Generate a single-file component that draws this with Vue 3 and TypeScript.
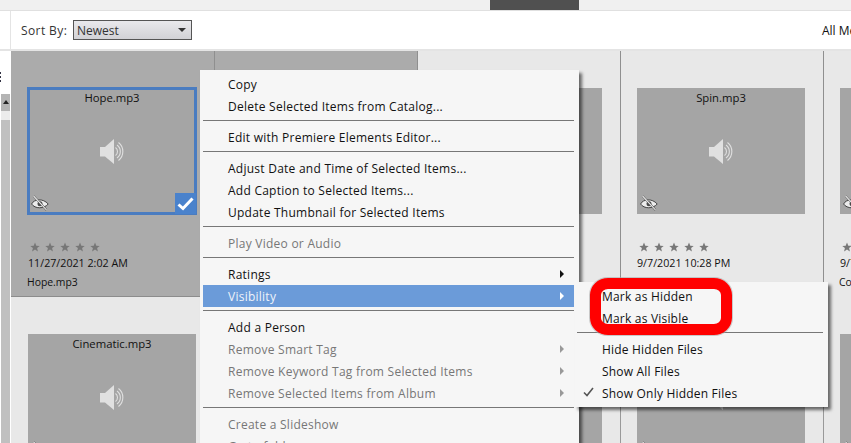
<script setup lang="ts">
interface Cell { title: string; date: string; name: string; selected?: boolean; picked?: boolean }
interface Item { label?: string; sep?: boolean; disabled?: boolean; active?: boolean; arrow?: boolean; check?: boolean }
const cells: Cell[] = [
  { title: 'Hope.mp3', date: '11/27/2021 2:02 AM', name: 'Hope.mp3', selected: true, picked: true },
  { title: '', date: '', name: '', selected: true },
  { title: '', date: '', name: '' },
  { title: 'Spin.mp3', date: '9/7/2021 10:28 PM', name: '' },
  { title: '', date: '9/7/2021 10:28 PM', name: 'Cool.mp3' },
  { title: 'Cinematic.mp3', date: '', name: '' },
  { title: '', date: '', name: '' },
  { title: '', date: '', name: '' },
  { title: '', date: '', name: '' },
  { title: '', date: '', name: '' },
]
const menu: Item[] = [
  { label: 'Copy' },
  { label: 'Delete Selected Items from Catalog...' },
  { sep: true },
  { label: 'Edit with Premiere Elements Editor...' },
  { sep: true },
  { label: 'Adjust Date and Time of Selected Items...' },
  { label: 'Add Caption to Selected Items...' },
  { label: 'Update Thumbnail for Selected Items' },
  { sep: true },
  { label: 'Play Video or Audio', disabled: true },
  { sep: true },
  { label: 'Ratings', arrow: true },
  { label: 'Visibility', arrow: true, active: true },
  { sep: true },
  { label: 'Add a Person' },
  { label: 'Remove Smart Tag', disabled: true, arrow: true },
  { label: 'Remove Keyword Tag from Selected Items', disabled: true, arrow: true },
  { label: 'Remove Selected Items from Album', disabled: true, arrow: true },
  { sep: true },
  { label: 'Create a Slideshow', disabled: true },
  { label: 'Go to folder', disabled: true },
]
const submenu: Item[] = [
  { label: 'Mark as Hidden' },
  { label: 'Mark as Visible' },
  { sep: true },
  { label: 'Hide Hidden Files' },
  { label: 'Show All Files' },
  { label: 'Show Only Hidden Files', check: true },
]
</script>

<template>
  <div class="page">
    <header class="topbar">
      <div class="tab"></div>
      <span class="clipped">y</span>
    </header>
    <div class="toolbar">
      <div class="toolbar-gap"></div>
      <span class="sort-label">Sort By:</span>
      <div class="select">
        <span>Newest</span>
        <i class="select-arrow"></i>
      </div>
      <span class="filter">All Media</span>
    </div>
    <div class="main">
      <aside class="side">
        <div class="dots"><i></i><i></i><i></i></div>
        <div class="scroll">
          <div class="scroll-up"><i></i></div>
          <div class="scroll-light"></div>
          <div class="scroll-track"></div>
        </div>
      </aside>
      <div class="grid">
        <div v-for="(c, i) in cells" :key="i" class="cell" :class="{ selected: c.selected, first: i % 5 === 0 }">
          <div class="thumb" :class="{ picked: c.picked }">
            <span class="thumb-title">{{ c.title }}</span>
            <svg class="speaker" width="24" height="25" viewBox="0 0 24 25">
              <path d="M0 8H5L14 0V25L5 17.5H0Z" fill="#e0e0e0" />
              <path d="M15.500 8.500a5 5 0 0 1 0 8M17 6a8 8 0 0 1 0 13M18.500 3.500a11.500 11.500 0 0 1 0 18" fill="none" stroke="#e0e0e0" stroke-width="1.100" />
            </svg>
            <svg class="eye" width="18" height="16" viewBox="0 0 18 16">
              <path d="M.6 9C3 4 12 3 17.200 9C13 14 4 14 .6 9Z" fill="#ececec" stroke="#333" stroke-width=".9" />
              <circle cx="9" cy="8.800" r="2.500" fill="#4a4a4a" />
              <path d="M2.500 .8L15.500 15" stroke="#555" stroke-width="1.900" />
              <path d="M2.500 .8L15.500 15" stroke="#f4f4f4" stroke-width="1.100" />
            </svg>
            <div v-if="c.picked" class="tick">
              <svg width="17" height="14" viewBox="0 0 17 14">
                <path d="M1.500 7.500L6 11.500L15.500 1.500" fill="none" stroke="#fff" stroke-width="3" />
              </svg>
            </div>
          </div>
          <div v-if="c.date" class="stars">
            <svg v-for="n in 5" :key="n" width="10" height="10" viewBox="0 0 10 10">
              <path d="M5 .5L6.300 3.700L9.700 3.900L7.100 6.100L7.900 9.500L5 7.600L2.100 9.500L2.900 6.100L.3 3.900L3.700 3.700Z" fill="#777" />
            </svg>
          </div>
          <div class="date">{{ c.date }}</div>
          <div class="name">{{ c.name }}</div>
        </div>
      </div>
    </div>

    <div class="menu context">
      <template v-for="(m, i) in menu" :key="i">
        <div v-if="m.sep" class="sep"><i></i></div>
        <div v-else class="item" :class="{ disabled: m.disabled, active: m.active }">
          <span>{{ m.label }}</span>
          <i v-if="m.arrow" class="arrow"></i>
        </div>
      </template>
    </div>

    <div class="menu sub">
      <template v-for="(m, i) in submenu" :key="i">
        <div v-if="m.sep" class="sep"><i></i></div>
        <div v-else class="item">
          <svg v-if="m.check" class="check" width="11" height="10" viewBox="0 0 11 10">
            <path d="M1 5.500L4 8.500L10 1" fill="none" stroke="#555" stroke-width="1.600" />
          </svg>
          <span>{{ m.label }}</span>
        </div>
      </template>
    </div>

    <div class="callout"></div>
  </div>
</template>

<style>
html, body { margin: 0; background: #fff; }
</style>

<style scoped>
.page {
  position: relative;
  width: 851px;
  height: 443px;
  overflow: hidden;
  font-family: "Open Sans", "Liberation Sans", sans-serif;
  font-size: 12px;
  color: #1c1c1c;
  background: #fff;
}
.topbar {
  height: 10px;
  display: flex;
  background: #f0f0f0;
  border-bottom: 1px solid #e0e0e0;
  overflow: hidden;
}
.tab { margin-left: 490px; width: 89px; background: #505050; flex: none; }
.clipped { margin: -16px 0 0 51px; line-height: 17px; color: #111; font-weight: 700; }
.toolbar {
  height: 38px;
  display: flex;
  align-items: center;
  background: #fff;
  border-bottom: 2px solid #e4e4e4;
  white-space: nowrap;
}
.toolbar > * { flex: none; }
.toolbar-gap { width: 10px; align-self: stretch; border-right: 1px solid #e4e4e4; margin-right: 10px; }
.sort-label { width: 52px; color: #333; letter-spacing: 0.4px; }
.select {
  box-sizing: border-box;
  width: 119px;
  height: 20px;
  padding: 0 5px 0 3px;
  display: flex;
  align-items: center;
  justify-content: space-between;
  border: 1px solid #555;
  background: linear-gradient(#e9e9ec, #d2d2d6);
  color: #333;
}
.select-arrow {
  width: 0;
  height: 0;
  border-left: 4px solid transparent;
  border-right: 4px solid transparent;
  border-top: 4px solid #333;
}
.filter { margin-left: 630px; color: #111; }
.main { display: flex; height: 392px; overflow: hidden; }
.side { width: 11px; flex: none; background: #fff; }
.dots { height: 43px; padding-top: 21px; box-sizing: border-box; display: flex; flex-direction: column; gap: 2px; }
.dots i { width: 1px; height: 2px; background: #334; }
.scroll { margin-left: 1px; width: 9px; }
.scroll-up { height: 17px; background: #b4b4b4; display: flex; justify-content: center; padding-top: 6px; box-sizing: border-box; }
.scroll-up i { width: 0; height: 0; border-left: 3px solid transparent; border-right: 3px solid transparent; border-bottom: 4px solid #222; }
.scroll-light { height: 9px; background: #ececec; }
.scroll-track { height: 330px; background: #c0c0c0; }
.grid {
  display: grid;
  grid-template-columns: 204px 203px 203px 203px 203px;
  grid-auto-rows: 246px;
  flex: none;
  width: 1016px;
}
.cell {
  box-sizing: border-box;
  padding: 37px 0 0 16px;
  background: #e8e8e8;
  border-right: 1px solid #8f8f8f;
}
.cell:nth-child(n + 6) { border-right-color: #999; }
.cell.first { padding-left: 17px; }
.cell.selected { background: #ababab; border-bottom: 1px solid #8c8c8c; }
.thumb {
  position: relative;
  box-sizing: border-box;
  width: 168px;
  height: 126px;
  display: flex;
  justify-content: center;
  background: #a5a5a5;
}
.thumb.picked { box-shadow: 0 0 0 1px #4a7cc0, inset 0 0 0 2px #4a7cc0; }
.thumb-title { margin-top: 2px; line-height: 16px; font-size: 11.300px; color: #111; }
.speaker { position: absolute; left: 72px; top: 51px; }
.eye { position: absolute; left: 3px; top: 107px; }
.tick {
  position: absolute;
  right: 0;
  bottom: 0;
  width: 21px;
  height: 21px;
  display: flex;
  align-items: center;
  justify-content: center;
  background: #4a82cc;
}
.stars { display: flex; gap: 5px; margin: 28px 0 0 2px; height: 10px; }
.stars svg { display: block; }
.date { margin-top: 3px; line-height: 16px; font-size: 10.700px; color: #111; white-space: nowrap; }
.name { margin: 3px 0 0 -1px; line-height: 16px; font-size: 10.400px; color: #111; white-space: nowrap; }
.menu {
  position: absolute;
  box-sizing: border-box;
  background: #f6f6f6;
  box-shadow: 3px 3px 3px rgba(0, 0, 0, 0.55);
  white-space: nowrap;
  letter-spacing: 0.25px;
}
.context { left: 200px; top: 70px; width: 379px; height: 400px; padding: 3px 5px 0 3px; }
.sub { left: 575px; top: 282px; width: 253px; height: 125px; padding: 3px 5px 0 2px; letter-spacing: 0.2px; }
.item {
  position: relative;
  height: 22px;
  padding-left: 25px;
  display: flex;
  align-items: center;
  color: #111;
}
.item.disabled { color: #777; }
.item.active { background: #6b9bd9; color: #eef3fa; }
.sep { height: 9px; padding-top: 3px; box-sizing: border-box; }
.sep i { display: block; height: 1px; background: #777; }
.arrow {
  position: absolute;
  right: 10px;
  top: 7px;
  width: 0;
  height: 0;
  border-top: 4px solid transparent;
  border-bottom: 4px solid transparent;
  border-left: 4px solid #111;
}
.disabled .arrow { border-left-color: #999; }
.active .arrow { border-left-color: #fff; }
.check { position: absolute; left: 6px; top: 5px; }
.callout {
  position: absolute;
  left: 590px;
  top: 278px;
  width: 142px;
  height: 57px;
  box-sizing: border-box;
  border: 11px solid #f00;
  border-radius: 18px 18px 18px 18px / 17px;
  box-shadow: 0 0 0 1px rgba(170, 170, 170, 0.6);
}
</style>
